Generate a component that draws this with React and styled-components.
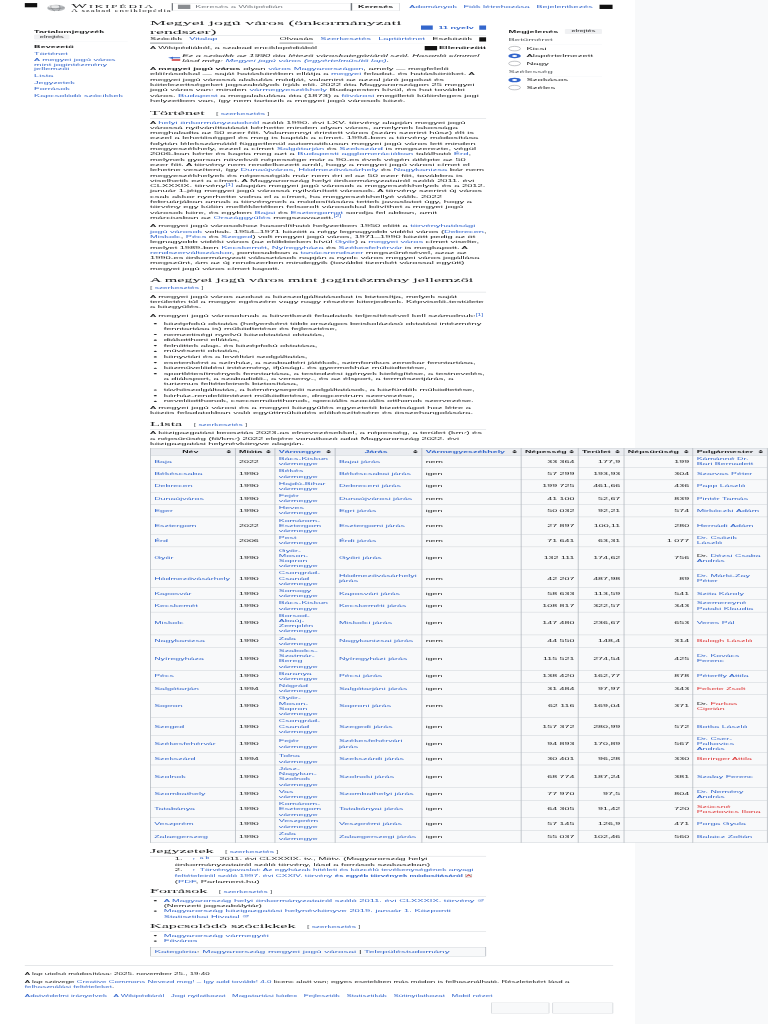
import React from "react";
import styled, { createGlobalStyle } from "styled-components";
import { ExternalLink } from "lucide-react";

const GlobalStyle = createGlobalStyle`
  html, body {
    margin: 0;
    width: 768px;
    height: 1024px;
    overflow: hidden;
    background: #f8f9fa;
  }
  * { box-sizing: border-box; }
`;

const rows = [
  ["Baja", "2022", "Bács-Kiskun\nvármegye", "Bajai járás", "nem", "33 364", "177,9", "199", [["Kámánné Dr.\nBari Bernadett"]]],
  ["Békéscsaba", "1990", "Békés\nvármegye", "Békéscsabai járás", "igen", "57 299", "193,93", "304", [["Szarvas Péter"]]],
  ["Debrecen", "1990", "Hajdú-Bihar\nvármegye", "Debreceni járás", "igen", "199 725", "461,66", "436", [["Papp László"]]],
  ["Dunaújváros", "1990", "Fejér\nvármegye", "Dunaújvárosi járás", "nem", "41 100", "52,67", "839", [["Pintér Tamás"]]],
  ["Eger", "1990", "Heves\nvármegye", "Egri járás", "igen", "50 032", "92,21", "574", [["Mirkóczki Ádám"]]],
  ["Esztergom", "2022", "Komárom-\nEsztergom\nvármegye", "Esztergomi járás", "nem", "27 897", "100,11", "280", [["Hernádi Ádám"]]],
  ["Érd", "2006", "Pest\nvármegye", "Érdi járás", "nem", "71 641", "63,31", "1 077", [["Dr. Csőzik\nLászló"]]],
  ["Győr", "1990", "Győr-\nMoson-\nSopron\nvármegye", "Győri járás", "igen", "132 111", "174,62", "756", [["Dr. ", "plain"], ["Dézsi Csaba\nAndrás"]]],
  ["Hódmezővásárhely", "1990", "Csongrád-\nCsanád\nvármegye", "Hódmezővásárhelyi\njárás", "nem", "42 207", "487,98", "89", [["Dr. Márki-Zay\nPéter"]]],
  ["Kaposvár", "1990", "Somogy\nvármegye", "Kaposvári járás", "igen", "58 633", "113,59", "541", [["Szita Károly"]]],
  ["Kecskemét", "1990", "Bács-Kiskun\nvármegye", "Kecskeméti járás", "igen", "108 817", "322,57", "343", [["Szemereyné\nPataki Klaudia"]]],
  ["Miskolc", "1990", "Borsod-\nAbaúj-\nZemplén\nvármegye", "Miskolci járás", "igen", "147 480", "236,67", "653", [["Veres Pál"]]],
  ["Nagykanizsa", "1990", "Zala\nvármegye", "Nagykanizsai járás", "nem", "44 550", "148,4", "314", [["Balogh László", "new"]]],
  ["Nyíregyháza", "1990", "Szabolcs-\nSzatmár-\nBereg\nvármegye", "Nyíregyházi járás", "igen", "115 521", "274,54", "425", [["Dr. Kovács\nFerenc"]]],
  ["Pécs", "1990", "Baranya\nvármegye", "Pécsi járás", "igen", "138 420", "162,77", "878", [["Péterffy Attila"]]],
  ["Salgótarján", "1994", "Nógrád\nvármegye", "Salgótarjáni járás", "igen", "31 484", "97,97", "343", [["Fekete Zsolt", "new"]]],
  ["Sopron", "1990", "Győr-\nMoson-\nSopron\nvármegye", "Soproni járás", "nem", "62 116", "169,04", "371", [["Dr. ", "plain"], ["Farkas\nCiprián", "new"]]],
  ["Szeged", "1990", "Csongrád-\nCsanád\nvármegye", "Szegedi járás", "igen", "157 372", "280,99", "572", [["Botka László"]]],
  ["Székesfehérvár", "1990", "Fejér\nvármegye", "Székesfehérvári\njárás", "igen", "94 893", "170,89", "567", [["Dr. Cser-\nPalkovics\nAndrás"]]],
  ["Szekszárd", "1994", "Tolna\nvármegye", "Szekszárdi járás", "igen", "30 401", "96,28", "330", [["Beringer Attila", "new"]]],
  ["Szolnok", "1990", "Jász-\nNagykun-\nSzolnok\nvármegye", "Szolnoki járás", "igen", "68 774", "187,24", "381", [["Szalay Ferenc"]]],
  ["Szombathely", "1990", "Vas\nvármegye", "Szombathelyi járás", "igen", "77 970", "97,5", "804", [["Dr. Nemény\nAndrás"]]],
  ["Tatabánya", "1990", "Komárom-\nEsztergom\nvármegye", "Tatabányai járás", "igen", "64 305", "91,42", "720", [["Szücsné\nPosztovics Ilona", "new"]]],
  ["Veszprém", "1990", "Veszprém\nvármegye", "Veszprémi járás", "igen", "57 145", "126,9", "471", [["Porga Gyula"]]],
  ["Zalaegerszeg", "1990", "Zala\nvármegye", "Zalaegerszegi járás", "igen", "55 037", "102,46", "560", [["Balaicz Zoltán"]]],
];

const columns = [
  { label: "Név", width: 137, center: true },
  { label: "Mióta", width: 64 },
  { label: "Vármegye", width: 97, link: true },
  { label: "Járás", width: 140, link: true, center: true },
  { label: "Vármegyeszékhely", width: 160, link: true },
  { label: "Népesség", width: 92 },
  { label: "Terület", width: 74 },
  { label: "Népsűrűség", width: 111 },
  { label: "Polgármester", width: 120 },
];

const duties = [
  "középfokú oktatás (helyenként több országos beiskolázású oktatási intézmény fenntartása is) működtetése és fejlesztése,",
  "nemzetiségi nyelvű közoktatási oktatás,",
  "diákotthoni ellátás,",
  "felnőttek alap- és középfokú oktatása,",
  "művészeti oktatás,",
  "könyvtári és a levéltári szolgáltatás,",
  "esetenként a színház, a szabadtéri játékok, szimfonikus zenekar fenntartása,",
  "közművelődési intézmény, ifjúsági- és gyermekház működtetése,",
  "sportlétesítmények fenntartása, a testedzési igények kielégítése, a testnevelés, a diáksport, a szabadidő-, a verseny-, és az élsport, a természetjárás, a turizmus feltételeinek biztosítása,",
  "távhőszolgáltatás, a kéményseprői szolgáltatások, a közfürdők működtetése,",
  "kórház-rendelőintézet működtetése, drogcentrum szervezése,",
  "nevelőotthonok, csecsemőotthonok, speciális szociális otthonok szervezése.",
];

const footerLinks = [
  "Adatvédelmi irányelvek",
  "A Wikipédiáról",
  "Jogi nyilatkozat",
  "Magatartási kódex",
  "Fejlesztők",
  "Statisztikák",
  "Sütinyilatkozat",
  "Mobil nézet",
];

const Frame = styled.div`
  width: 768px;
  height: 1024px;
  overflow: hidden;
  filter: blur(0.3px);
`;

// the reference is a tall page squeezed into the window, so the page is laid
// out at its real size and squeezed the same way
const Stage = styled.div`
  width: 1239px;
  transform: scale(0.62, 0.236);
  transform-origin: 0 0;
`;

const Page = styled.div`
  width: 1024px;
  height: 4340px;
  background: #fff;
  color: #202122;
  font-family: "Liberation Sans", Arial, sans-serif;
  font-size: 15.1px;
  line-height: 22.4px;
`;

const Header = styled.header`
  height: 60px;
  padding: 13px 0 0 40px;
  display: flex;
  align-items: flex-start;
  font-size: 14.6px;
`;

const Missing = styled.span`
  display: inline-block;
  flex: none;
  width: ${(p) => p.$w || 20}px;
  height: 18px;
  background: ${(p) => p.$color || "#111"};
`;

const LogoLink = styled.div`
  display: flex;
  align-items: center;
  gap: 10px;
  margin: -5px 0 0 16px;
  padding-top: 4px;
  width: 201px;
`;

const Wordmark = styled.div`
  font-family: "Liberation Serif", serif;
  line-height: 1;
`;

const WordmarkName = styled.div`
  font-size: 27px;
  font-variant: small-caps;
  letter-spacing: 3px;
`;

const WordmarkTag = styled.div`
  font-size: 14.5px;
  letter-spacing: 1.5px;
  white-space: nowrap;
`;

const SearchBox = styled.div`
  width: 289px;
  height: 32px;
  display: flex;
  align-items: center;
  gap: 8px;
  padding-left: 8px;
  border: 1px solid #c8ccd1;
  border-left: 2px solid #72777d;
  color: #72777d;
`;

const SearchButton = styled.div`
  width: 79px;
  height: 32px;
  border: 1px solid #c8ccd1;
  border-left: 2px solid #72777d;
  font-weight: bold;
  text-align: center;
  line-height: 30px;
`;

const UserLinks = styled.nav`
  display: flex;
  align-items: center;
  height: 32px;
  gap: 10.5px;
  margin-left: 15px;
`;

const A = styled.span`
  color: ${(p) => (p.$new ? "#d33" : "#36c")};
`;

const RefTitle = styled.span`
  color: #36c;
  font-weight: bold;
  font-size: 12.6px;
`;

const Columns = styled.div`
  display: grid;
  grid-template-columns: 151px 542px 151px;
  column-gap: 36px;
  padding-left: 55px;
`;

const Toc = styled.aside`
  padding-top: 62px;
  font-size: 14.6px;
`;

const SideTitleRow = styled.div`
  font-weight: bold;
  line-height: 22px;
`;

const HideButton = styled.div`
  display: inline-block;
  width: ${(p) => p.$w || 57}px;
  height: 21px;
  background: #f0f1f3;
  text-align: center;
  font-size: 12px;
  font-weight: normal;
  line-height: 21px;
  border-radius: 2px;
`;

const TocDivider = styled.div`
  height: 1px;
  background: #eaecf0;
  margin: 7px 0 8px;
`;

const TocList = styled.div`
  display: flex;
  flex-direction: column;
`;

const TocItem = styled.div`
  line-height: 18px;
  padding: 5px 0 6px;
  font-weight: ${(p) => (p.$bold ? "bold" : "normal")};
  color: ${(p) => (p.$bold ? "#202122" : "#36c")};
`;

const Main = styled.main`
  width: 542px;
  padding-top: 19px;
`;

const TitleRow = styled.div`
  display: flex;
  align-items: flex-start;
  justify-content: space-between;
  height: 73px;
  border-bottom: 1px solid #a2a9b1;
`;

const Title = styled.h1`
  margin: 0;
  width: 420px;
  font-family: "Liberation Serif", serif;
  font-size: 28.8px;
  font-weight: normal;
  line-height: 36px;
`;

const LangButton = styled.div`
  display: flex;
  align-items: center;
  gap: 9px;
  margin-top: 27px;
  color: #36c;
  font-size: 14.6px;
  font-weight: bold;
`;

const TabBar = styled.div`
  display: flex;
  justify-content: space-between;
  height: 33px;
  border-bottom: 1px solid #eaecf0;
  font-size: 15px;
`;

const TabGroup = styled.div`
  display: flex;
  align-items: stretch;
  gap: 11.5px;
`;

const Tab = styled.span`
  display: flex;
  align-items: center;
  color: ${(p) => (p.$plain ? "#202122" : "#36c")};
  border-bottom: 3px solid ${(p) => (p.$on ? "#72777d" : "transparent")};
`;

const SubRow = styled.div`
  display: flex;
  justify-content: space-between;
  align-items: center;
  font-size: 14.7px;
  height: 38px;
`;

const Verified = styled.span`
  display: flex;
  align-items: center;
  gap: 3px;
  font-weight: bold;
`;

const Hatnote = styled.div`
  display: flex;
  align-items: center;
  gap: 3px;
  padding-left: 29px;
  margin-top: 3px;
  font-style: italic;
`;

const HatnoteText = styled.div`
  width: 490px;
`;

const Para = styled.p`
  margin: ${(p) => p.$top || 7}px 0 ${(p) => p.$bottom || 7}px;
  letter-spacing: ${(p) => (p.$snug ? "-0.12px" : "normal")};
  white-space: ${(p) => (p.$fixedLines ? "nowrap" : "normal")};
`;

const Sup = styled.sup`
  font-size: 11px;
  line-height: 0;
  color: #36c;
`;

const BackRefs = styled(Sup)`
  margin-right: 12px;
`;

const Section = styled.h2`
  margin: ${(p) => p.$top || 22}px 0 6px;
  padding-bottom: 2px;
  border-bottom: 1px solid #a2a9b1;
  font-family: "Liberation Serif", serif;
  font-size: 26px;
  font-weight: normal;
  line-height: 30px;
`;

const EditLink = styled.span`
  margin-left: ${(p) => (p.$wrapped ? 0 : 12)}px;
  font-family: "Liberation Sans", Arial, sans-serif;
  font-size: 13.5px;
  color: #54595d;
  white-space: nowrap;
`;

const Bullets = styled.ul`
  margin: 0 0 0 22px;
  padding: 0;
  letter-spacing: ${(p) => (p.$snug ? "-0.15px" : "normal")};
`;

const Bullet = styled.li`
  margin-bottom: ${(p) => (p.$tight ? 0 : 1.4)}px;
`;

const Table = styled.table`
  width: 995px;
  table-layout: fixed;
  border-collapse: collapse;
  background: #f8f9fa;
  margin-top: 7px;
  font-size: 14.3px;
`;

const Th = styled.th`
  background: #eaecf0;
  border: 1px solid #a2a9b1;
  padding: 3.2px 5.6px;
  font-size: 14.3px;
`;

const ThInner = styled.div`
  display: flex;
  align-items: center;
  justify-content: space-between;
`;

const ThLabel = styled.span`
  flex: ${(p) => (p.$center ? 1 : "none")};
  text-align: center;
  color: ${(p) => (p.$link ? "#36c" : "#202122")};
`;

const Td = styled.td`
  border: 1px solid #a2a9b1;
  padding: 3.2px 5.6px;
  vertical-align: middle;
  text-align: ${(p) => (p.$right ? "right" : "left")};
  white-space: pre-line;
`;

const RefList = styled.ol`
  margin: -6px 0 0 40px;
  padding: 0;
  line-height: 23px;
  list-style-position: inside;
`;

const RefMark = styled.span`
  margin: 0 6px 0 10px;
  color: #36c;
`;

const RefSmall = styled.span`
  font-size: 13.5px;
  color: #36c;
`;

const CatBox = styled.div`
  margin-top: 17px;
  padding: 0 6px;
  height: 37px;
  line-height: 35px;
  border: 1px solid #a2a9b1;
  background: #f8f9fa;
  font-size: 16px;
`;

const Tools = styled.aside`
  padding-top: 62px;
  font-size: 15.5px;
`;

const ToolsHead = styled.div`
  display: flex;
  align-items: center;
  justify-content: space-between;
  font-size: 15px;
  font-weight: bold;
  height: 22px;
`;

const ToolsGroup = styled.div`
  margin-top: ${(p) => p.$top || 15}px;
  padding-bottom: 7px;
  border-bottom: 1px solid #eaecf0;
  color: #54595d;
  line-height: 22px;
`;

const RadioRow = styled.label`
  display: flex;
  align-items: center;
  gap: 9px;
  height: 31.5px;
`;

const RadioDot = styled.span`
  width: 20px;
  height: 20px;
  border-radius: 50%;
  flex: none;
  background: #fff;
  border: ${(p) => (p.$on ? "6px solid #36c" : "1px solid #72777d")};
`;

const RadioList = styled.div`
  padding-top: 1px;
`;

const Footer = styled.footer`
  margin: 38px 35px 0 40px;
  padding-top: 23px;
  border-top: 2px solid #c8ccd1;
  font-size: 12.9px;
  line-height: 22.4px;
`;

const FooterLine = styled.div`
  margin-bottom: ${(p) => p.$gap || 0}px;
`;

const FooterNav = styled.nav`
  display: flex;
  gap: 10.6px;
  color: #36c;
`;

const Badges = styled.div`
  display: flex;
  justify-content: flex-end;
  gap: 5px;
  margin-top: 18px;
`;

const Badge = styled.div`
  width: ${(p) => p.$w}px;
  height: 47px;
  background: #f8f9fa;
  border: 1px solid #c8ccd1;
`;

const PdfSvg = styled.svg`
  vertical-align: middle;
  margin: 0 2px;
`;

const Globe = () => (
  <svg width="46" height="43" viewBox="0 0 46 43" aria-hidden="true">
    <ellipse cx="23" cy="21.5" rx="23" ry="21.5" fill="#b9bcbf" />
    <ellipse cx="17" cy="14" rx="14" ry="10" fill="#e6e7e8" />
    <path d="M3 22 C12 28 30 30 44 20 M10 6 C8 18 12 32 20 42 M30 2 C34 14 34 28 28 42" fill="none" stroke="#77797c" strokeWidth="2" />
  </svg>
);

const HatnoteIcon = () => (
  <svg width="20" height="22" viewBox="0 0 20 22" aria-hidden="true">
    <path d="M0 8 L8 3 V6 H20 V10 H8 V13 Z" fill="#36c" />
    <path d="M6 14 H20 V20 H6 Z" fill="#c33" />
  </svg>
);

const SortIcon = () => (
  <svg width="8" height="14" viewBox="0 0 8 14" aria-hidden="true">
    <path d="M4 0 L8 6 H0 Z M4 14 L0 8 H8 Z" fill="#202122" />
  </svg>
);

const PdfIcon = () => (
  <PdfSvg width="14" height="18" viewBox="0 0 14 22" aria-hidden="true">
    <rect x="1" y="3" width="12" height="16" fill="#eee" stroke="#999" />
    <path d="M2 16 L7 6 L12 16" fill="none" stroke="#c33" strokeWidth="2.5" />
  </PdfSvg>
);

const Ext = () => <ExternalLink size={11} color="#36c" />;

const Edit = ({ wrapped }) => (
  <EditLink $wrapped={wrapped}>
    [ <A>szerkesztés</A> ]
  </EditLink>
);

const Radio = ({ label, on }) => (
  <RadioRow>
    <RadioDot $on={on} />
    {label}
  </RadioRow>
);

const Mayor = ({ parts }) =>
  parts.map(([text, kind], i) =>
    kind === "plain" ? <span key={i}>{text}</span> : <A key={i} $new={kind === "new"}>{text}</A>
  );

const App = () => (
  <>
    <GlobalStyle />
    <Frame>
      <Stage>
        <Page>
          <Header>
            <Missing />
            <LogoLink>
              <Globe />
              <Wordmark>
                <WordmarkName>Wikipédia</WordmarkName>
                <WordmarkTag>A szabad enciklopédia</WordmarkTag>
              </Wordmark>
            </LogoLink>
            <SearchBox>
              <Missing $color="#8a8d91" />
              Keresés a Wikipédián
            </SearchBox>
            <SearchButton>Keresés</SearchButton>
            <UserLinks>
              <A>Adományok</A>
              <A>Fiók létrehozása</A>
              <A>Bejelentkezés</A>
              <Missing $w={21} />
            </UserLinks>
          </Header>

          <Columns>
            <Toc>
              <SideTitleRow>Tartalomjegyzék</SideTitleRow>
              <HideButton $w={57}>elrejtés</HideButton>
              <TocDivider />
              <TocList>
                <TocItem $bold>Bevezető</TocItem>
                <TocItem>Történet</TocItem>
                <TocItem>A megyei jogú város mint jogintézmény jellemzői</TocItem>
                <TocItem>Lista</TocItem>
                <TocItem>Jegyzetek</TocItem>
                <TocItem>Források</TocItem>
                <TocItem>Kapcsolódó szócikkek</TocItem>
              </TocList>
            </Toc>

            <Main>
              <TitleRow>
                <Title>Megyei jogú város (önkormányzati rendszer)</Title>
                <LangButton>
                  <Missing $w={19} $color="#36c" />
                  11 nyelv
                  <Missing $w={11} $color="#36c" />
                </LangButton>
              </TitleRow>
              <TabBar>
                <TabGroup>
                  <Tab $on $plain>Szócikk</Tab>
                  <Tab>Vitalap</Tab>
                </TabGroup>
                <TabGroup>
                  <Tab $on $plain>Olvasás</Tab>
                  <Tab>Szerkesztés</Tab>
                  <Tab>Laptörténet</Tab>
                  <Tab $plain>Eszközök</Tab>
                  <Tab $plain><Missing $w={11} /></Tab>
                </TabGroup>
              </TabBar>
              <SubRow>
                A Wikipédiából, a szabad enciklopédiából
                <Verified>
                  <Missing $w={20} />
                  Ellenőrzött
                </Verified>
              </SubRow>
              <Hatnote>
                <HatnoteIcon />
                <HatnoteText>
                  Ez a szócikk az 1990 óta létező városkategóriáról szól. Hasonló címmel lásd még: <A>Megyei jogú város (egyértelműsítő lap)</A>.
                </HatnoteText>
              </Hatnote>
              <Para $top={10}>
                A <b>megyei jogú város</b> olyan <A>város</A> <A>Magyarországon</A>, amely — megfelelő előírásokkal — saját hatáskörében ellátja a <A>megyei</A> feladat- és hatásköröket. A megyei jogú várossá alakulás módját, valamint az azzal járó jogokat és kötelezettségeket jogszabályok írják elő. 2022 óta Magyarországon 25 megyei jogú város van: minden <A>vármegyeszékhely</A> Budapesten kívül, és hat további város. <A>Budapest</A> a megalakulása óta (1873) a <A>fővárosi</A> megillető különleges jogi helyzetben van, így nem tartozik a megyei jogú városok közé.
              </Para>

              <Section $top={27}>Történet <Edit /></Section>
              <Para $top={5}>
                A <A>helyi önkormányzatokról</A> szóló 1990. évi LXV. törvény alapján megyei jogú várossá nyilváníttatását kérhette minden olyan város, amelynek lakossága meghaladta az 50 ezer főt. Valamennyi érintett város (szám szerint húsz) élt is ezzel a lehetőséggel és meg is kapták a címet. 1994-ben a törvény módosítása folytán lélekszámától függetlenül automatikusan megyei jogú város lett minden megyeszékhely, ezzel a címet <A>Salgótarján</A> és <A>Szekszárd</A> is megszerezte, végül 2006-ban kérte és kapta meg azt a <A>Budapesti agglomerációban</A> található <A>Érd</A>, melynek gyorsan növekvő népessége már a 90-es évek végén átlépte az 50 ezer főt. A törvény nem rendelkezett arról, hogy a megyei jogú városi címet el lehetne veszíteni, így <A>Dunaújváros</A>, <A>Hódmezővásárhely</A> és <A>Nagykanizsa</A> bár nem megyeszékhelyek és népességük már nem éri el az 50 ezer főt, továbbra is viselhetik ezt a címet. A Magyarország helyi önkormányzatairól szóló 2011. évi CLXXXIX. törvény<Sup>[1]</Sup> alapján megyei jogú városok a megyeszékhelyek és a 2012. január 1-jéig megyei jogú várossá nyilvánított városok. A törvény szerint új város csak akkor nyerhette volna el a címet, ha megyeszékhellyé válik. 2022 februárjában annak a törvénynek a módosítására tettek javaslatot úgy, hogy a törvény egy külön mellékletében felsorolt városokkal bővíthet a megyei jogú városok köre, és egyben <A>Bajai</A> és <A>Esztergomot</A> sorolja fel abban, amit márciusban az <A>Országgyűlés</A> megszavazott.<Sup>[2]</Sup>
              </Para>
              <Para $top={14} $snug $fixedLines>
                A megyei jogú városokhoz hasonlítható helyzetben 1950 előtt a <A>törvényhatósági</A><br />
                <A>jogú városok</A> voltak. 1954–1971 között a négy legnagyobb vidéki város (<A>Debrecen</A>,<br />
                <A>Miskolc</A>, <A>Pécs</A> és <A>Szeged</A>) volt megyei jogú város, 1971–1990 között pedig az öt<br />
                legnagyobb vidéki város (az előbbieken kívül <A>Győr</A>) a <A>megyei város</A> címet viselte,<br />
                melyet 1989-ben <A>Kecskemét</A>, <A>Nyíregyháza</A> és <A>Székesfehérvár</A> is megkapott. A<br />
                <A>rendszerváltozáskor</A>, pontosabban a <A>tanácsrendszer</A> megszűnésével, azaz az<br />
                1990-es önkormányzati választások napján a nyolc város megyei város jogállása<br />
                megszűnt, ám az új rendszerben mindegyik (további tizenkét várossal együtt)<br />
                megyei jogú város címet kapott.
              </Para>

              <Section>A megyei jogú város mint jogintézmény jellemzői <Edit wrapped /></Section>
              <Para $top={8} $snug>
                A megyei jogú város azokat a közszolgáltatásokat is biztosítja, melyek saját területén túl a megye egészére vagy nagy részére kiterjednek. Képviselő-testülete a közgyűlés.
              </Para>
              <Para $top={14} $bottom={10}>
                A megyei jogú városoknak a következő feladatok teljesítésével kell számolnuk:<Sup>[1]</Sup>
              </Para>
              <Bullets $snug>
                {duties.map((d) => <Bullet key={d}>{d}</Bullet>)}
              </Bullets>
              <Para $top={4} $bottom={14}>
                A megyei jogú városi és a megyei közgyűlés egyeztető bizottságot hoz létre a közös feladatokban való együttműködés előkészítésére és összehangolására.
              </Para>

              <Section>Lista <Edit /></Section>
              <Para $top={5} $bottom={1} $snug>
                A közigazgatási beosztás 2023-as elnevezésekkel, a népesség, a terület (km²) és a népsűrűség (fő/km²) 2022 elejére vonatkozó adat Magyarország 2022. évi közigazgatási helynévkönyve alapján.
              </Para>
              <Table>
                <colgroup>
                  {columns.map((c) => <col key={c.label} width={c.width} />)}
                </colgroup>
                <thead>
                  <tr>
                    {columns.map((c) => (
                      <Th key={c.label}>
                        <ThInner>
                          <ThLabel $center={c.center} $link={c.link}>{c.label}</ThLabel>
                          <SortIcon />
                        </ThInner>
                      </Th>
                    ))}
                  </tr>
                </thead>
                <tbody>
                  {rows.map((r) => (
                    <tr key={r[0]}>
                      <Td><A>{r[0]}</A></Td>
                      <Td>{r[1]}</Td>
                      <Td><A>{r[2]}</A></Td>
                      <Td><A>{r[3]}</A></Td>
                      <Td>{r[4]}</Td>
                      <Td $right>{r[5]}</Td>
                      <Td $right>{r[6]}</Td>
                      <Td $right>{r[7]}</Td>
                      <Td><Mayor parts={r[8]} /></Td>
                    </tr>
                  ))}
                </tbody>
              </Table>

              <Section $top={20}>Jegyzetek <Edit /></Section>
              <RefList>
                <li><RefMark>↑</RefMark><BackRefs>a b</BackRefs> 2011. évi CLXXXIX. tv., Mötv. (Magyarország helyi önkormányzatairól szóló törvény, lásd a források szakaszban)</li>
                <li>
                  <RefMark>↑</RefMark><RefSmall>Törvényjavaslat: Az egyházak hitéleti és közcélú tevékenységének anyagi feltételeiről szóló 1997. évi CXXIV. törvény</RefSmall> <RefTitle>és egyéb törvények módosításáról</RefTitle><PdfIcon /> (<A>PDF</A>, Parlament.hu)
                </li>
              </RefList>

              <Section $top={16}>Források <Edit /></Section>
              <Bullets>
                <Bullet $tight><A>A Magyarország helyi önkormányzatairól szóló 2011. évi CLXXXIX. törvény</A> <Ext /> (Nemzeti jogszabálytár)</Bullet>
                <Bullet $tight><A>Magyarország közigazgatási helynévkönyve 2019. január 1. Központi Statisztikai Hivatal</A> <Ext /></Bullet>
              </Bullets>

              <Section $top={16}>Kapcsolódó szócikkek <Edit /></Section>
              <Bullets>
                <Bullet $tight><A>Magyarország vármegyéi</A></Bullet>
                <Bullet $tight><A>Főváros</A></Bullet>
              </Bullets>

              <CatBox>
                <A>Kategória</A>: <A>Magyarország megyei jogú városai</A> | <A>Településtudomány</A>
              </CatBox>
            </Main>

            <Tools>
              <ToolsHead>
                Megjelenés
                <HideButton $w={60}>elrejtés</HideButton>
              </ToolsHead>
              <ToolsGroup>Betűméret</ToolsGroup>
              <RadioList>
                <Radio label="Kicsi" />
                <Radio label="Alapértelmezett" on />
                <Radio label="Nagy" />
              </RadioList>
              <ToolsGroup $top={8}>Szélesség</ToolsGroup>
              <RadioList>
                <Radio label="Szokásos" on />
                <Radio label="Széles" />
              </RadioList>
            </Tools>
          </Columns>

          <Footer>
            <FooterLine $gap={12}>A lap utolsó módosítása: 2025. november 25., 19:40</FooterLine>
            <FooterLine $gap={14}>
              A lap szövege <A>Creative Commons Nevezd meg! – Így add tovább! 4.0</A> licenc alatt van; egyes esetekben más módon is felhasználható. Részletekért lásd a <A>felhasználási feltételeket</A>.
            </FooterLine>
            <FooterNav>
              {footerLinks.map((l) => <span key={l}>{l}</span>)}
            </FooterNav>
            <Badges>
              <Badge $w={94} />
              <Badge $w={98} />
            </Badges>
          </Footer>
        </Page>
      </Stage>
    </Frame>
  </>
);

export default App;
